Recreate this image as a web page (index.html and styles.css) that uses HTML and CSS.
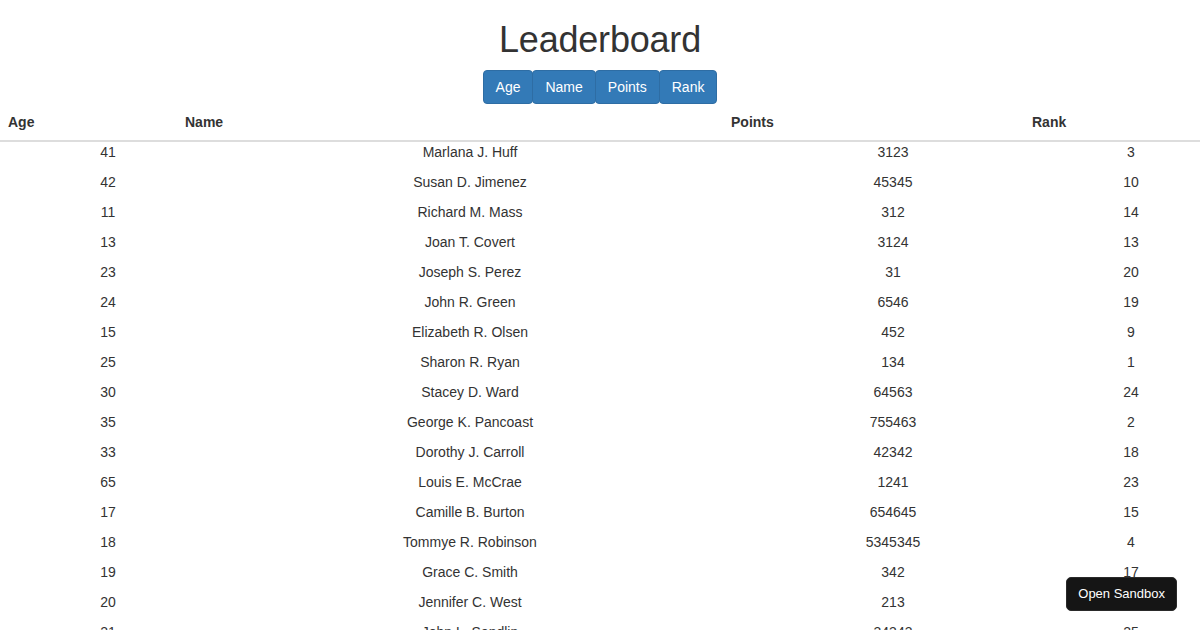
FILE: index.html
```html
<!DOCTYPE html>
<html>
<head>
<meta charset="utf-8">
<link rel="stylesheet" href="styles.css">
</head>
<body>
<div class="app">
  <h1 class="title">Leaderboard</h1>
  <div class="sorts">
    <button class="btn">Age</button><button class="btn">Name</button><button class="btn">Points</button><button class="btn">Rank</button>
  </div>
  <table class="head">
    <colgroup><col class="h1c"><col class="h2c"><col class="h3c"><col class="h4c"></colgroup>
    <thead><tr><th>Age</th><th>Name</th><th>Points</th><th>Rank</th></tr></thead>
  </table>
  <table class="body">
    <colgroup><col class="b1c"><col class="b2c"><col class="b3c"><col class="b4c"></colgroup>
    <tbody>
      <tr><td>41</td><td>Marlana J. Huff</td><td>3123</td><td>3</td></tr>
      <tr><td>42</td><td>Susan D. Jimenez</td><td>45345</td><td>10</td></tr>
      <tr><td>11</td><td>Richard M. Mass</td><td>312</td><td>14</td></tr>
      <tr><td>13</td><td>Joan T. Covert</td><td>3124</td><td>13</td></tr>
      <tr><td>23</td><td>Joseph S. Perez</td><td>31</td><td>20</td></tr>
      <tr><td>24</td><td>John R. Green</td><td>6546</td><td>19</td></tr>
      <tr><td>15</td><td>Elizabeth R. Olsen</td><td>452</td><td>9</td></tr>
      <tr><td>25</td><td>Sharon R. Ryan</td><td>134</td><td>1</td></tr>
      <tr><td>30</td><td>Stacey D. Ward</td><td>64563</td><td>24</td></tr>
      <tr><td>35</td><td>George K. Pancoast</td><td>755463</td><td>2</td></tr>
      <tr><td>33</td><td>Dorothy J. Carroll</td><td>42342</td><td>18</td></tr>
      <tr><td>65</td><td>Louis E. McCrae</td><td>1241</td><td>23</td></tr>
      <tr><td>17</td><td>Camille B. Burton</td><td>654645</td><td>15</td></tr>
      <tr><td>18</td><td>Tommye R. Robinson</td><td>5345345</td><td>4</td></tr>
      <tr><td>19</td><td>Grace C. Smith</td><td>342</td><td>17</td></tr>
      <tr><td>20</td><td>Jennifer C. West</td><td>213</td><td>16</td></tr>
      <tr><td>21</td><td>John L. Sandlin</td><td>34343</td><td>25</td></tr>
    </tbody>
  </table>
</div>
<a class="sandbox">Open Sandbox</a>
</body>
</html>
```
FILE: styles.css
```css
html, body {
  margin: 0;
  padding: 0;
  background: #fff;
}
body {
  font-family: "Liberation Sans", Arial, sans-serif;
  font-size: 14px;
  line-height: 20px;
  color: #333;
  overflow: hidden;
}
.app {
  text-align: center;
}
.title {
  font-size: 36px;
  font-weight: 500;
  line-height: 1.1;
  margin: 20px 0 10px;
  color: #333;
  letter-spacing: -0.2px;
}
.sorts {
  display: flex;
  justify-content: center;
}
.btn {
  font-family: "Liberation Sans", Arial, sans-serif;
  font-size: 14px;
  line-height: 20px;
  padding: 6px 12px;
  color: #fff;
  background: #337ab7;
  border: 1px solid #2e6da4;
  border-radius: 4px;
  cursor: pointer;
  margin: 0 -1px 0 0;
}
.btn:last-child { margin-right: 0; }
table {
  width: 100%;
  border-collapse: collapse;
  table-layout: fixed;
}
.head th {
  text-align: left;
  font-weight: bold;
  padding: 8px;
  border-bottom: 2px solid #ddd;
}
.h1c { width: 177px; }
.h2c { width: 546px; }
.h3c { width: 301px; }
.h4c { width: 176px; }
.b1c { width: 216px; }
.b2c { width: 508px; }
.b3c { width: 338px; }
.b4c { width: 138px; }
.body td {
  text-align: center;
  padding: 0 8px 10px;
}
.sandbox {
  position: fixed;
  right: 23px;
  bottom: 19px;
  background: #151515;
  color: #fff;
  font-family: "Liberation Sans", Arial, sans-serif;
  font-size: 13px;
  line-height: 20px;
  padding: 6px 11px;
  border-radius: 5px;
  border: 1px solid #2a2a2a;
}
```
